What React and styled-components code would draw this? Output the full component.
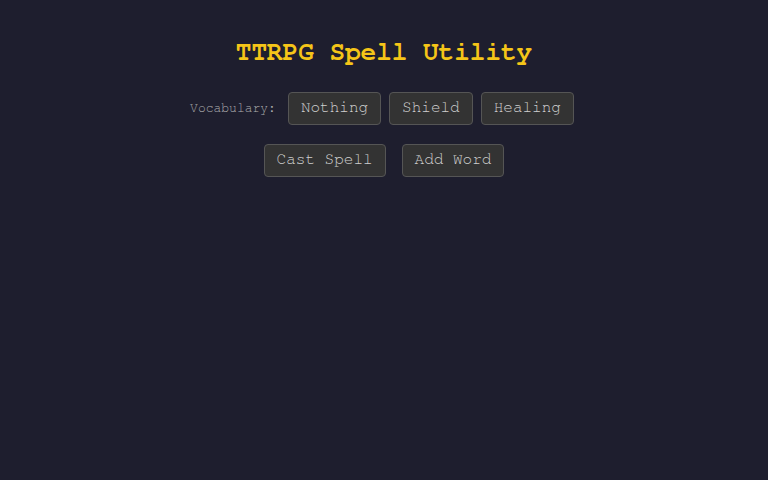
import React from "react";
import styled, { createGlobalStyle } from "styled-components";

const Global = createGlobalStyle`
  html, body { margin: 0; padding: 0; background: #1e1e2e; }
  body { font-family: FreeMono, "Courier New", "Liberation Mono", monospace; }
`;

const Page = styled.div`
  min-height: 480px;
  box-sizing: border-box;
  padding-top: 37px;
  display: flex;
  flex-direction: column;
  align-items: center;
  background: #1e1e2e;
`;

const Title = styled.h1`
  margin: 0 0 25px;
  font-family: FreeMono, "Courier New", "Liberation Mono", monospace;
  font-size: 26px;
  line-height: 30px;
  font-weight: bold;
  color: #f5c518;
`;

const Row = styled.div`
  display: flex;
  align-items: center;
  margin-bottom: ${(p) => p.$mb || 0}px;
`;

const Label = styled.span`
  font-size: 13px;
  color: #b0b0b0;
  margin-right: 8px;
`;

const Button = styled.button`
  font-family: FreeMono, "Courier New", "Liberation Mono", monospace;
  font-size: 16px;
  line-height: 19px;
  padding: 5px 12px 7px;
  margin: 0 ${(p) => p.$mx}px;
  background: #333333;
  color: #d0d0d0;
  border: 1px solid #555555;
  border-radius: 4px;
  cursor: pointer;
`;

export default function App() {
  return (
    <>
      <Global />
      <Page>
        <Title>TTRPG Spell Utility</Title>
        <Row $mb={19}>
          <Label>Vocabulary:</Label>
          <Button $mx={4}>Nothing</Button>
          <Button $mx={4}>Shield</Button>
          <Button $mx={4}>Healing</Button>
        </Row>
        <Row>
          <Button $mx={8}>Cast Spell</Button>
          <Button $mx={8}>Add Word</Button>
        </Row>
      </Page>
    </>
  );
}
